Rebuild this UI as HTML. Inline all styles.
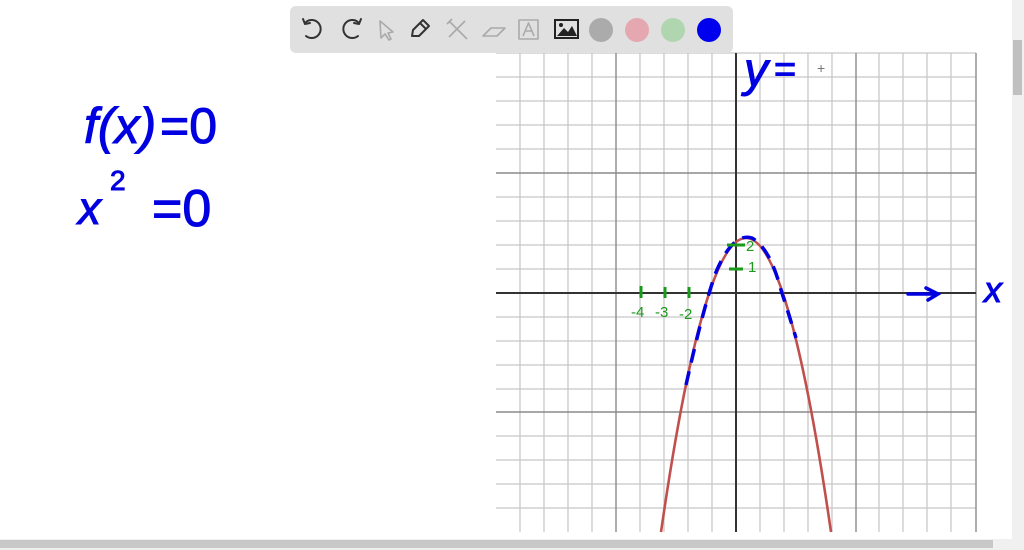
<!DOCTYPE html>
<html><head><meta charset="utf-8"><style>
html,body{margin:0;padding:0;background:#fff;width:1024px;height:550px;overflow:hidden;font-family:"Liberation Sans",sans-serif}
</style></head><body>
<svg width="1024" height="550" viewBox="0 0 1024 550" xmlns="http://www.w3.org/2000/svg" style="position:absolute;left:0;top:0">
<g stroke="#c8c8c8" stroke-width="1.3">
<line x1="520" y1="53" x2="520" y2="532"/><line x1="544" y1="53" x2="544" y2="532"/><line x1="568" y1="53" x2="568" y2="532"/><line x1="592" y1="53" x2="592" y2="532"/>
<line x1="640" y1="53" x2="640" y2="532"/><line x1="664" y1="53" x2="664" y2="532"/><line x1="688" y1="53" x2="688" y2="532"/><line x1="712" y1="53" x2="712" y2="532"/>
<line x1="760" y1="53" x2="760" y2="532"/><line x1="784" y1="53" x2="784" y2="532"/><line x1="808" y1="53" x2="808" y2="532"/><line x1="832" y1="53" x2="832" y2="532"/>
<line x1="879" y1="53" x2="879" y2="532"/><line x1="903" y1="53" x2="903" y2="532"/><line x1="927" y1="53" x2="927" y2="532"/><line x1="951" y1="53" x2="951" y2="532"/>
<line x1="496" y1="53" x2="976" y2="53"/><line x1="496" y1="77" x2="976" y2="77"/><line x1="496" y1="101" x2="976" y2="101"/><line x1="496" y1="125" x2="976" y2="125"/><line x1="496" y1="149" x2="976" y2="149"/>
<line x1="496" y1="197" x2="976" y2="197"/><line x1="496" y1="221" x2="976" y2="221"/><line x1="496" y1="245" x2="976" y2="245"/><line x1="496" y1="269" x2="976" y2="269"/>
<line x1="496" y1="317" x2="976" y2="317"/><line x1="496" y1="341" x2="976" y2="341"/><line x1="496" y1="365" x2="976" y2="365"/><line x1="496" y1="389" x2="976" y2="389"/>
<line x1="496" y1="436" x2="976" y2="436"/><line x1="496" y1="460" x2="976" y2="460"/><line x1="496" y1="484" x2="976" y2="484"/><line x1="496" y1="508" x2="976" y2="508"/>
</g>
<g stroke="#8a8a8a" stroke-width="1.4">
<line x1="616" y1="53" x2="616" y2="532"/><line x1="856" y1="53" x2="856" y2="532"/><line x1="976" y1="53" x2="976" y2="532"/>
<line x1="496" y1="173" x2="976" y2="173"/><line x1="496" y1="412" x2="976" y2="412"/>
</g>
<g stroke="#333" stroke-width="2">
<line x1="736" y1="53" x2="736" y2="532"/><line x1="496" y1="293" x2="976" y2="293"/>
</g>
<path d="M661 532 Q746 -56 831 532" fill="none" stroke="#c0504d" stroke-width="2.6"/>
<path d="M686 385 Q704 305 716 272 Q733 232 752 238 Q770 248 781 290 Q790 318 796 338" fill="none" stroke="#0000e0" stroke-width="3.5" stroke-dasharray="14 9"/>
<g stroke="#1a9a1a" stroke-width="3">
<line x1="641" y1="286" x2="641" y2="298"/><line x1="665" y1="287" x2="665" y2="298"/><line x1="689" y1="287" x2="689" y2="298"/>
<line x1="727" y1="245" x2="745" y2="245"/><line x1="729" y1="269" x2="743" y2="269"/>
</g>
<g fill="#1a9a1a" font-size="15">
<text x="631" y="317">-4</text><text x="655" y="317">-3</text><text x="679" y="319">-2</text>
<text x="746" y="251">2</text><text x="748" y="272">1</text>
</g>
<path d="M908 294 L936 294 M926 288 L938 294 L928 300" fill="none" stroke="#0000e0" stroke-width="3.5" stroke-linecap="round"/>
<g fill="#0000e0" stroke="#0000e0" stroke-width="1">
<text x="984" y="302" font-size="36" font-style="italic">x</text>
<text x="744" y="86" font-size="48" font-style="italic">y</text>
<text x="774" y="82" font-size="38">=</text>
<text x="84" y="143" font-size="50" font-style="italic">f(x)</text>
<text x="160" y="143" font-size="50">=0</text>
<text x="78" y="224" font-size="46" font-style="italic">x</text>
<text x="110" y="190" font-size="28">2</text>
<text x="152" y="226" font-size="52">=0</text>
</g>
<text x="817" y="73" font-size="14" fill="#777">+</text>
<rect x="1012" y="0" width="12" height="550" fill="#f0f0f0"/>
<rect x="1013" y="40" width="9" height="55" fill="#c0c0c0"/>
<rect x="0" y="539" width="1012" height="11" fill="#f0f0f0"/>
<rect x="0" y="540" width="993" height="8" fill="#c8c8c8"/>
<rect x="290" y="6" width="443" height="47" rx="6" fill="#e0e0e0"/>
<g fill="none" stroke="#333" stroke-width="2" stroke-linecap="round" stroke-linejoin="round">
<path d="M306 22 A9 9 0 1 1 306 36"/><path d="M303 19 L305 24 L310 23"/>
<path d="M358 22 A9 9 0 1 0 358 36"/><path d="M361 19 L359 24 L354 23"/>
<path d="M412 36 L413 30 L423 20 L429 26 L419 36 Z M420 23 L426 29"/>
</g>
<g fill="none" stroke="#aaa" stroke-width="1.6" stroke-linejoin="round">
<path d="M380 21 L381 38 L385 34 L389 40 L391 39 L388 33 L393 32 Z"/>
<path d="M449 21 L465 37 M465 21 L449 37 M447 24 L452 19 M462 34 L467 39"/>
<path d="M483 36 L491 28 L505 28 L497 36 Z"/>
<rect x="519" y="20" width="19" height="19"/><path d="M523 36 L528.5 23 L534 36 M525 31 L532 31"/>
</g>
<rect x="555" y="20" width="23" height="18" fill="none" stroke="#222" stroke-width="2"/>
<path d="M557 36 L564 28 L568 32 L572 26 L577 36 Z" fill="#222"/><circle cx="561" cy="25" r="2" fill="#222"/>
<circle cx="601" cy="30" r="12" fill="#ababab"/>
<circle cx="637" cy="30" r="12" fill="#e6a8b0"/>
<circle cx="673" cy="30" r="12" fill="#b0d6b0"/>
<circle cx="709" cy="30" r="12" fill="#0000ee"/>
</svg>
</body></html>
